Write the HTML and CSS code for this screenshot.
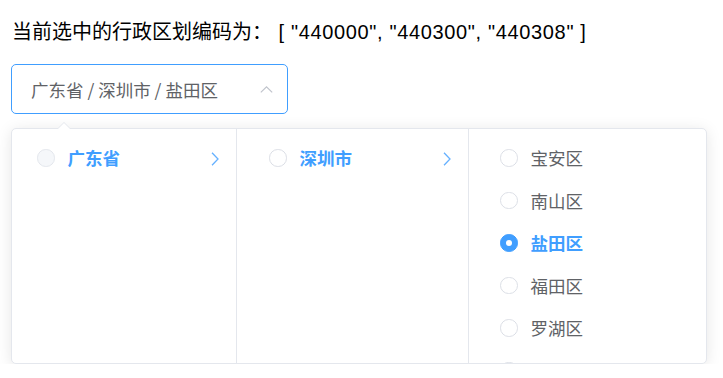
FILE: index.html
```html
<!DOCTYPE html>
<html lang="zh">
<head>
<meta charset="utf-8">
<link rel="stylesheet" href="styles.css">
</head>
<body>
<div class="page">
  <div class="title">当前选中的行政区划编码为： <span class="codes">[ "440000", "440300", "440308" ]</span></div>
  <div class="cascader">
    <span class="value">广东省 / 深圳市 / 盐田区</span>
    <svg class="caret" width="13" height="7" viewBox="0 0 13 7"><path d="M0.8 6.4 L6.5 0.9 L12.2 6.4" fill="none" stroke="#c0c4cc" stroke-width="1.2"/></svg>
  </div>
  <div class="dropdown">
    <div class="popper-arrow"></div>
    <div class="menus">
      <div class="menu menu1">
        <div class="node">
          <span class="radio disabled"></span>
          <span class="label active">广东省</span>
          <svg class="arrow" width="8" height="14" viewBox="0 0 8 14"><path d="M1 0.8 L7 7 L1 13.2" fill="none" stroke="#66b1ff" stroke-width="1.3"/></svg>
        </div>
      </div>
      <div class="menu menu2">
        <div class="node">
          <span class="radio"></span>
          <span class="label active">深圳市</span>
          <svg class="arrow" width="8" height="14" viewBox="0 0 8 14"><path d="M1 0.8 L7 7 L1 13.2" fill="none" stroke="#66b1ff" stroke-width="1.3"/></svg>
        </div>
      </div>
      <div class="menu menu3">
        <div class="node"><span class="radio"></span><span class="label">宝安区</span></div>
        <div class="node"><span class="radio"></span><span class="label">南山区</span></div>
        <div class="node"><span class="radio checked"></span><span class="label active">盐田区</span></div>
        <div class="node"><span class="radio"></span><span class="label">福田区</span></div>
        <div class="node"><span class="radio"></span><span class="label">罗湖区</span></div>
        <div class="node"><span class="radio"></span></div>
      </div>
    </div>
  </div>
</div>
</body>
</html>
```

FILE: styles.css
```css
* { box-sizing: border-box; }
html, body { margin: 0; padding: 0; background: #fff; }
body {
  font-family: "Liberation Sans", "Noto Sans CJK SC", sans-serif;
  color: #606266;
}
.page {
  padding: 18px 0 0 11px;
}
.title {
  font-size: 20px;
  line-height: 26px;
  color: #000;
  padding-left: 1px;
  font-family: "Noto Sans CJK SC", sans-serif;
}
.codes {
  font-family: "Liberation Sans", sans-serif;
  letter-spacing: 0.65px;
  margin-left: 2px;
}
.cascader {
  margin-top: 19px;
  width: 277px;
  height: 50px;
  border: 1px solid #409eff;
  border-radius: 5px;
  display: flex;
  align-items: center;
  justify-content: space-between;
  padding: 0 14px 0 19px;
  font-family: "Noto Sans CJK SC", sans-serif;
  font-size: 17.5px;
  color: #606266;
}
.caret { display: block; margin-top: 1px; }
.dropdown {
  position: relative;
  margin-top: 14px;
  width: 696px;
  height: 236px;
  border: 1px solid #e4e7ed;
  border-radius: 5px;
  box-shadow: 0 2px 15px rgba(0, 0, 0, 0.1);
  background: #fff;
}
.popper-arrow {
  position: absolute;
  top: -7px;
  left: 45px;
  width: 0;
  height: 0;
  border-left: 7px solid transparent;
  border-right: 7px solid transparent;
  border-bottom: 7px solid #e4e7ed;
}
.popper-arrow::after {
  content: "";
  position: absolute;
  left: -6px;
  top: 1px;
  border-left: 6px solid transparent;
  border-right: 6px solid transparent;
  border-bottom: 6px solid #fff;
}
.menus {
  display: flex;
  height: 100%;
  overflow: hidden;
  border-radius: 5px;
}
.menu {
  height: 100%;
  padding-top: 7.5px;
  overflow: hidden;
}
.menu1 { width: 225px; border-right: 1px solid #e4e7ed; }
.menu2 { width: 232px; border-right: 1px solid #e4e7ed; }
.menu3 { flex: 1; }
.node {
  position: relative;
  display: flex;
  align-items: center;
  height: 42.5px;
  font-family: "Noto Sans CJK SC", sans-serif;
  font-size: 17.5px;
}
.menu1 .node { padding-left: 25px; }
.menu2 .node { padding-left: 32px; }
.menu3 .node { padding-left: 31px; }
.radio {
  width: 17.5px;
  height: 17.5px;
  border: 1px solid #dcdfe6;
  border-radius: 50%;
  background: #fff;
  flex: none;
  position: relative;
}
.radio.disabled {
  background: #f5f7fa;
  border-color: #e4e7ed;
}
.radio.checked {
  background: #409eff;
  border-color: #409eff;
}
.radio.checked::after {
  content: "";
  position: absolute;
  left: 50%;
  top: 50%;
  width: 6px;
  height: 6px;
  margin: -3px 0 0 -3px;
  border-radius: 50%;
  background: #fff;
}
.label {
  margin-left: 13px;
  color: #606266;
  line-height: 1;
}
.label.active {
  color: #409eff;
  font-weight: bold;
}
.arrow {
  position: absolute;
  right: 17px;
  top: 50%;
  margin-top: -6px;
}
```
